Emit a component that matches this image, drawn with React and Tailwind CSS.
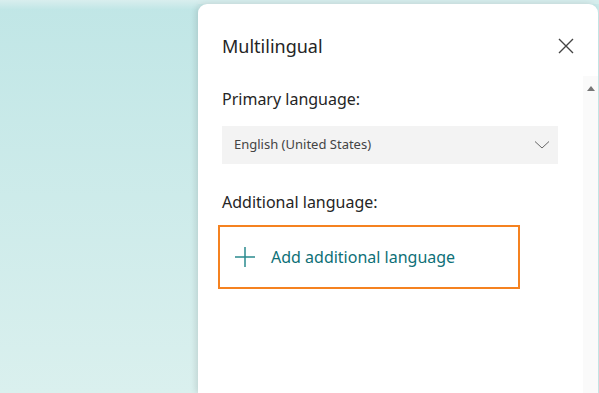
export default function App() {
    return (
        <div
            className="w-[599px] h-[393px] overflow-hidden relative flex"
            style={{ fontFamily: '"Segoe UI", "Noto Sans", "Open Sans", sans-serif' }}
        >
            <div className="w-[198px] shrink-0 bg-gradient-to-b from-[#c0e6e6] to-[#daf0ee]">
                <div className="h-[10px] bg-gradient-to-b from-[#d9eeee] to-[#c0e6e6]"></div>
            </div>
            <div className="flex-1 flex flex-col bg-[#c9eaea]">
                <div className="h-[4px] bg-[#d6eded]"></div>
                <div className="flex-1 bg-white rounded-t-[9px] shadow-[-2px_0_6px_rgba(0,0,0,0.12)] mr-[1px] flex">
                    <div className="flex-1 pl-[24px] pr-[25px]">
                        <div className="flex items-center justify-between h-[36px] mt-[24px]">
                            <h1 className="text-[18px] text-[#252525]">Multilingual</h1>
                            <svg width="18" height="18" viewBox="0 0 18 18" className="mr-[-17px]">
                                <path d="M2 2 L16 16 M16 2 L2 16" stroke="#444" strokeWidth="1.4" fill="none" />
                            </svg>
                        </div>
                        <div className="mt-[23px] text-[16px] text-[#252525] leading-[24px]">Primary language:</div>
                        <div className="mt-[15px] h-[38px] bg-[#f3f3f3] flex items-center justify-between pl-[12px] pr-[8px]">
                            <span className="text-[13px] text-[#444]">English (United States)</span>
                            <svg width="16" height="10" viewBox="0 0 16 10">
                                <path d="M1 1.5 L8 8 L15 1.5" stroke="#666" strokeWidth="1" fill="none" />
                            </svg>
                        </div>
                        <div className="mt-[26px] text-[16px] text-[#252525] leading-[24px]">Additional language:</div>
                        <div className="mt-[11px] ml-[-4px] w-[302px] h-[64px] border-2 border-[#f58220] flex items-center pl-[14px]">
                            <svg width="22" height="22" viewBox="0 0 22 22">
                                <path d="M11 1 L11 21 M1 11 L21 11" stroke="#2a8a8f" strokeWidth="1.5" fill="none" />
                            </svg>
                            <span className="ml-[15px] text-[16px] text-[#0e7077]">Add additional language</span>
                        </div>
                    </div>
                    <div className="w-[15px] mt-[72px] bg-[#fafafa] flex justify-center pt-[10px]">
                        <svg width="8" height="5" viewBox="0 0 8 5">
                            <path d="M0 5 L4 0 L8 5 Z" fill="#777" />
                        </svg>
                    </div>
                </div>
            </div>
        </div>
    );
}
